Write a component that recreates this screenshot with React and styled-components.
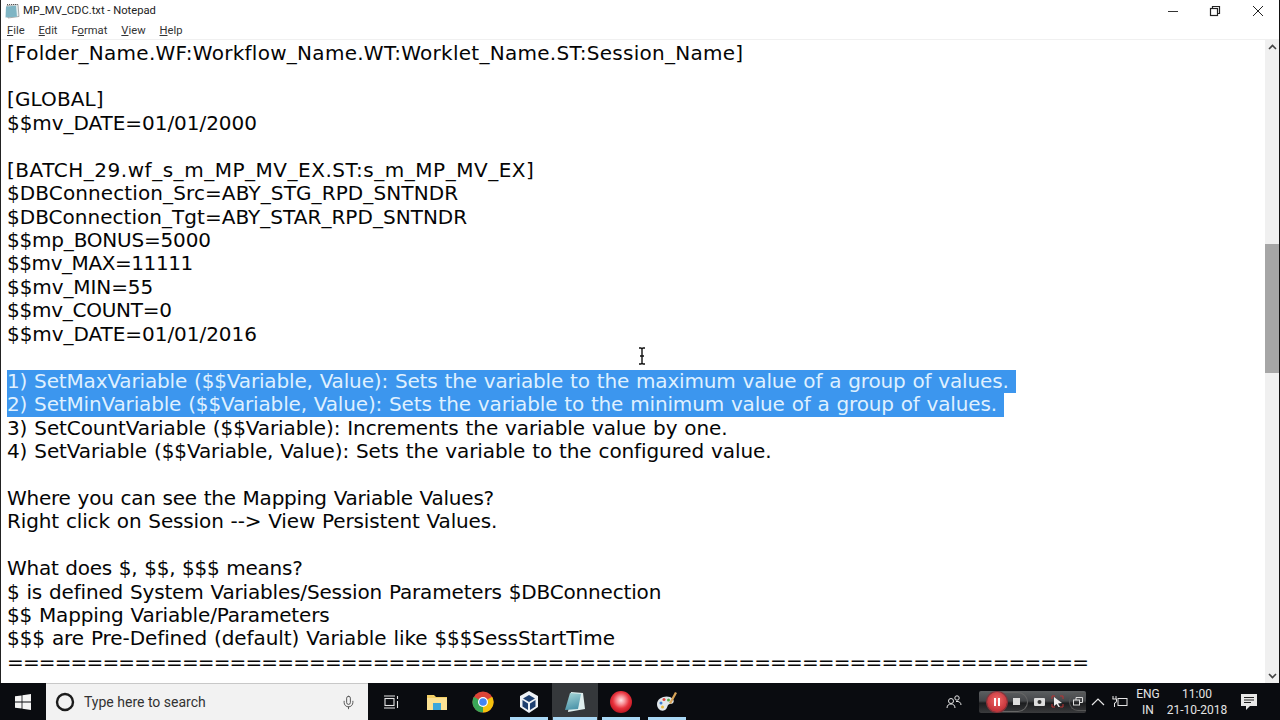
import React from 'react';
import styled, { createGlobalStyle } from 'styled-components';
import { Mic } from 'lucide-react';

const GlobalStyle = createGlobalStyle`
  html, body { margin: 0; padding: 0; background: #fff; }
  #root { width: 1280px; height: 720px; overflow: hidden; }
`;

const Screen = styled.div`
  width: 1280px;
  height: 720px;
  display: flex;
  flex-direction: column;
  overflow: hidden;
  position: relative;
  font-family: Roboto, "Noto Sans", sans-serif;
`;

const Window = styled.div`
  flex: 1;
  min-height: 0;
  display: flex;
  flex-direction: column;
  background: #fff;
  border-left: 1px solid #222;
  border-right: 1px solid #111;
`;

const TitleBar = styled.div`
  height: 20px;
  padding-top: 1px;
  box-sizing: border-box;
  display: flex;
  align-items: center;
  gap: 3px;
  padding-left: 3px;
  font-size: 11.2px;
  color: #222;
`;

const TitleText = styled.span`
  flex: 1;
`;

const WindowControls = styled.div`
  display: flex;
`;

const WindowButton = styled.div`
  width: 42.5px;
  display: flex;
  justify-content: center;
  color: #222;
`;

const MenuBar = styled.div`
  height: 20px;
  display: flex;
  align-items: center;
  gap: 14px;
  padding: 1px 0 0 6px;
  font-size: 11.2px;
  color: #333;
  border-bottom: 1px solid #f0f0f0;
  box-sizing: border-box;
`;

const MenuItem = styled.span`
  & u { text-underline-offset: 1px; }
`;

const Editor = styled.div`
  flex: 1;
  min-height: 0;
  display: flex;
`;

const TextPane = styled.div`
  flex: 1;
  min-width: 0;
  overflow: hidden;
  padding: 1.5px 0 0 6px;
  font-family: "DejaVu Sans", Verdana, sans-serif;
  font-size: 20px;
  word-spacing: 0.7px;
  color: #050505;
`;

const Line = styled.div`
  height: 23.45px;
  line-height: 23.45px;
  white-space: pre;
  letter-spacing: ${(p) => p.$spacing || 0}px;
`;

const Selected = styled.span`
  display: inline-block;
  background: #3c96ee;
  color: #dff0ff;
`;

const Scrollbar = styled.div`
  width: 14px;
  background: #f0f0f0;
  display: flex;
  flex-direction: column;
  align-items: stretch;
`;

const ScrollArrow = styled.div`
  height: 14px;
  display: flex;
  align-items: center;
  justify-content: center;
`;

const ScrollTrack = styled.div`
  flex: 1;
`;

const ScrollThumb = styled.div`
  height: 129px;
  margin-top: 190px;
  background: #a6a6a6;
`;

const IBeam = styled.svg`
  position: absolute;
  left: 637px;
  top: 347px;
`;

const Taskbar = styled.div`
  height: 37px;
  display: flex;
  align-items: stretch;
  background: #0a0c10;
  color: #e8e8e8;
`;

const StartButton = styled.div`
  width: 46px;
  display: flex;
  align-items: center;
  justify-content: center;
`;

const SearchBox = styled.div`
  width: 322px;
  background: #f2f2f2;
  border-top: 1px solid #c8c8c8;
  box-sizing: border-box;
  display: flex;
  align-items: center;
  padding: 0 12px 0 9px;
  gap: 9px;
  font-size: 14px;
  color: #333;
`;

const SearchText = styled.span`
  flex: 1;
`;

const TaskIcons = styled.div`
  display: flex;
  align-items: stretch;
  flex: 1;
`;

const TaskButton = styled.div`
  width: 46px;
  display: flex;
  align-items: center;
  justify-content: center;
  position: relative;
  box-sizing: border-box;
  background: ${(p) => (p.$active ? '#35383b' : 'transparent')};
  &::after {
    content: '';
    display: ${(p) => (p.$running ? 'block' : 'none')};
    position: absolute;
    left: ${(p) => (p.$active ? 1 : 4)}px;
    right: ${(p) => (p.$active ? 1 : 4)}px;
    bottom: 0;
    height: 3px;
    background: #a9d8f5;
  }
`;

const Tray = styled.div`
  display: flex;
  align-items: center;
`;

const RecorderBar = styled.div`
  width: 107px;
  height: 22px;
  margin: 0 5px 0 17px;
  background: linear-gradient(#5c5f61, #45474a 45%, #1c1d1f 55%, #3a3b3d);
  border-radius: 2px;
  display: flex;
  align-items: center;
  padding-left: 8px;
  box-sizing: border-box;
`;

const RecorderPill = styled.div`
  width: 43px;
  height: 20px;
  border: 1px solid #666;
  border-left: none;
  border-radius: 10px;
  box-sizing: border-box;
  display: flex;
  align-items: center;
  margin-right: 6px;
`;

const RecordPause = styled.div`
  width: 20px;
  height: 20px;
  border-radius: 50%;
  background: radial-gradient(circle at 50% 40%, #f26a6a, #b01c24);
  display: flex;
  align-items: center;
  justify-content: center;
  gap: 2px;
  box-shadow: 0 0 0 1px #8a3038;
  & i { display: block; width: 2px; height: 8px; background: #fff; }
`;

const RecorderStop = styled.div`
  width: 7px;
  height: 7px;
  background: #ddd;
  margin-left: 6px;
`;

const RecorderTool = styled.div`
  display: flex;
  margin-right: ${(p) => p.$gap}px;
`;

const WindowPill = styled.div`
  width: 18px;
  height: 18px;
  border: 1px solid #555;
  border-right: none;
  border-radius: 9px 0 0 9px;
  box-sizing: border-box;
  display: flex;
  align-items: center;
  justify-content: center;
`;

const Chevron = styled.svg`
  margin-right: 7px;
`;

const TrayText = styled.div`
  display: flex;
  flex-direction: column;
  align-items: center;
  font-size: 12px;
  line-height: 16px;
  color: #e4e4e4;
  width: ${(p) => p.$width}px;
  margin-left: ${(p) => p.$left || 0}px;
`;

const Notification = styled.div`
  width: 42px;
  margin-right: 10px;
  display: flex;
  justify-content: center;
`;

const lines = [
  { text: '[Folder_Name.WF:Workflow_Name.WT:Worklet_Name.ST:Session_Name]', spacing: 0.274 },
  { text: '' },
  { text: '[GLOBAL]', spacing: 0.12 },
  { text: '$$mv_DATE=01/01/2000', spacing: -0.05 },
  { text: '' },
  { text: '[BATCH_29.wf_s_m_MP_MV_EX.ST:s_m_MP_MV_EX]', spacing: 0.52 },
  { text: '$DBConnection_Src=ABY_STG_RPD_SNTNDR', spacing: 0.11 },
  { text: '$DBConnection_Tgt=ABY_STAR_RPD_SNTNDR', spacing: 0.03 },
  { text: '$$mp_BONUS=5000', spacing: -0.2 },
  { text: '$$mv_MAX=11111', spacing: -0.43 },
  { text: '$$mv_MIN=55', spacing: -0.09 },
  { text: '$$mv_COUNT=0', spacing: -0.25 },
  { text: '$$mv_DATE=01/01/2016', spacing: -0.05 },
  { text: '' },
  { text: '1) SetMaxVariable ($$Variable, Value): Sets the variable to the maximum value of a group of values. ', spacing: -0.155, selected: true },
  { text: '2) SetMinVariable ($$Variable, Value): Sets the variable to the minimum value of a group of values. ', spacing: -0.155, selected: true },
  { text: '3) SetCountVariable ($$Variable): Increments the variable value by one.', spacing: -0.1 },
  { text: '4) SetVariable ($$Variable, Value): Sets the variable to the configured value.', spacing: -0.1 },
  { text: '' },
  { text: 'Where you can see the Mapping Variable Values?', spacing: -0.23 },
  { text: 'Right click on Session --> View Persistent Values.', spacing: -0.14 },
  { text: '' },
  { text: 'What does $, $$, $$$ means?', spacing: -0.25 },
  { text: '$ is defined System Variables/Session Parameters $DBConnection', spacing: -0.166 },
  { text: '$$ Mapping Variable/Parameters', spacing: -0.17 },
  { text: '$$$ are Pre-Defined (default) Variable like $$$SessStartTime', spacing: -0.083 },
  { text: '='.repeat(68), spacing: -0.86 },
];

const TitleIcon = () => (
  <svg width="16" height="16" viewBox="0 0 16 16">
    <path d="M3 2.5 L14 1.5 L15 13.5 L4 15 Z" fill="#e8f0f0" stroke="#777" strokeWidth="0.6" />
    <path d="M2 3.5 L12 2.8 L13 13.8 L1.5 14.5 Z" fill="#7fb5c4" />
    <path d="M3 1.5 H13.5" stroke="#555" strokeWidth="1.2" strokeDasharray="1 1" />
  </svg>
);

const App = () => (
  <Screen>
    <GlobalStyle />
    <Window>
      <TitleBar>
        <TitleIcon />
        <TitleText>MP_MV_CDC.txt - Notepad</TitleText>
        <WindowControls>
          <WindowButton>
            <svg width="12" height="12" viewBox="0 0 12 12"><path d="M1 6.5 H11" stroke="#333" strokeWidth="1" /></svg>
          </WindowButton>
          <WindowButton>
            <svg width="12" height="12" viewBox="0 0 12 12" fill="none" stroke="#222" strokeWidth="1.2">
              <rect x="1.5" y="3.5" width="7" height="7" />
              <path d="M3.5 3.5 V1.5 H10.5 V8.5 H8.5" />
            </svg>
          </WindowButton>
          <WindowButton>
            <svg width="12" height="12" viewBox="0 0 12 12"><path d="M1 1 L11 11 M11 1 L1 11" stroke="#222" strokeWidth="1" /></svg>
          </WindowButton>
        </WindowControls>
      </TitleBar>
      <MenuBar>
        <MenuItem><u>F</u>ile</MenuItem>
        <MenuItem><u>E</u>dit</MenuItem>
        <MenuItem>F<u>o</u>rmat</MenuItem>
        <MenuItem><u>V</u>iew</MenuItem>
        <MenuItem><u>H</u>elp</MenuItem>
      </MenuBar>
      <Editor>
        <TextPane>
          {lines.map((line, i) => (
            <Line key={i} $spacing={line.spacing}>
              {line.selected ? <Selected>{line.text}</Selected> : line.text}
            </Line>
          ))}
        </TextPane>
        <Scrollbar>
          <ScrollArrow>
            <svg width="9" height="6" viewBox="0 0 9 6"><path d="M1 5 L4.5 1.5 L8 5" fill="none" stroke="#444" strokeWidth="1.6" /></svg>
          </ScrollArrow>
          <ScrollTrack><ScrollThumb /></ScrollTrack>
          <ScrollArrow>
            <svg width="9" height="6" viewBox="0 0 9 6"><path d="M1 1 L4.5 4.5 L8 1" fill="none" stroke="#444" strokeWidth="1.6" /></svg>
          </ScrollArrow>
        </Scrollbar>
      </Editor>
    </Window>
    <Taskbar>
      <StartButton>
        <svg width="16" height="16" viewBox="0 0 16 16" fill="#f4f4f4">
          <path d="M0 2.3 L6.6 1.4 V7.5 H0 Z M7.4 1.3 L16 0 V7.5 H7.4 Z M0 8.4 H6.6 V14.6 L0 13.7 Z M7.4 8.4 H16 V16 L7.4 14.8 Z" />
        </svg>
      </StartButton>
      <SearchBox>
        <svg width="20" height="20" viewBox="0 0 20 20"><circle cx="10" cy="10" r="8" fill="none" stroke="#1c1c1c" strokeWidth="2.4" /></svg>
        <SearchText>Type here to search</SearchText>
        <Mic size={15} color="#444" strokeWidth={1.4} />
      </SearchBox>
      <TaskIcons>
        <TaskButton>
          <svg width="16" height="14" viewBox="0 0 16 14" fill="none" stroke="#e6e6e6" strokeWidth="1.1">
            <rect x="2" y="3.5" width="9" height="7" />
            <path d="M1 1 H12 M1 13 H12 M14.5 1 V4 M14.5 6 V13" />
          </svg>
        </TaskButton>
        <TaskButton>
          <svg width="22" height="20" viewBox="0 0 22 20">
            <path d="M1 3 H8 L10 5 H21 V18 H1 Z" fill="#f3cf64" />
            <rect x="1" y="6" width="20" height="12" fill="#fbe193" />
            <rect x="7" y="11" width="8" height="7" fill="#3aa6dc" />
          </svg>
        </TaskButton>
        <TaskButton>
          <svg width="22" height="22" viewBox="0 0 22 22">
            <circle cx="11" cy="11" r="10.5" fill="#db4437" />
            <path d="M11 11 L20.1 5.7 A10.5 10.5 0 0 1 11 21.5 Z" fill="#f4c20d" />
            <path d="M11 11 L11 21.5 A10.5 10.5 0 0 1 1.9 5.7 Z" fill="#3aa757" />
            <circle cx="11" cy="11" r="5" fill="#fff" />
            <circle cx="11" cy="11" r="3.8" fill="#4285f4" />
          </svg>
        </TaskButton>
        <TaskButton $running>
          <svg width="22" height="24" viewBox="0 0 22 24">
            <path d="M11 1 L20 6 V17 L11 23 L2 17 V6 Z" fill="#eef2f6" />
            <path d="M11 5 L17 8.5 L11 12 L5 8.5 Z" fill="#1d3f70" />
            <path d="M4.5 10 L10 13.5 V20 L4.5 16.5 Z M17.5 10 L12 13.5 V20 L17.5 16.5 Z" fill="#1d3f70" />
          </svg>
        </TaskButton>
        <TaskButton $running $active>
          <svg width="24" height="24" viewBox="0 0 24 24">
            <defs>
              <linearGradient id="padFace" x1="0" y1="0" x2="0.3" y2="1">
                <stop offset="0" stopColor="#a9d8d8" />
                <stop offset="1" stopColor="#4f97ac" />
              </linearGradient>
            </defs>
            <path d="M8 2 L20 3 L22 19 L5 22 Z" fill="#dfeeee" />
            <path d="M7 3 L18 4 L15 19 L2 20 Z" fill="url(#padFace)" />
          </svg>
        </TaskButton>
        <TaskButton $running>
          <svg width="24" height="24" viewBox="0 0 24 24">
            <defs>
              <radialGradient id="recGlow" cx="0.5" cy="0.42" r="0.6">
                <stop offset="0" stopColor="#ffe4e6" />
                <stop offset="0.3" stopColor="#f8959b" />
                <stop offset="0.62" stopColor="#e8323d" />
                <stop offset="1" stopColor="#b5121c" />
              </radialGradient>
            </defs>
            <circle cx="12" cy="12" r="11" fill="url(#recGlow)" />
          </svg>
        </TaskButton>
        <TaskButton $running>
          <svg width="24" height="24" viewBox="0 0 24 24">
            <path d="M2 14 C2 8 10 5 15 7 C20 9 20 14 15 14 C12 14 13 18 10 20 C6 22 2 19 2 14 Z" fill="#dfe6ea" />
            <circle cx="6" cy="13" r="1.5" fill="#3f7fd0" />
            <circle cx="9" cy="9.5" r="1.5" fill="#e0483e" />
            <circle cx="13.5" cy="10" r="1.5" fill="#57a84a" />
            <circle cx="7.5" cy="17" r="1.5" fill="#e8b93c" />
            <path d="M14 13 L20 2 L22 3 L16 14 Z" fill="#d8a458" />
          </svg>
        </TaskButton>
      </TaskIcons>
      <Tray>
        <svg width="16" height="16" viewBox="0 0 16 16" fill="none" stroke="#e6e6e6" strokeWidth="1">
          <circle cx="5" cy="7" r="2.5" />
          <path d="M1 14 C1 11 3 10 5 10 C7 10 9 11 9 14" />
          <circle cx="11" cy="4" r="2.2" />
          <path d="M10 7.5 C13 7 15 8.5 15 11" />
        </svg>
        <RecorderBar>
          <RecorderPill>
            <RecordPause><i /><i /></RecordPause>
            <RecorderStop />
          </RecorderPill>
          <RecorderTool $gap={6}>
            <svg width="11" height="9" viewBox="0 0 11 9"><rect y="1" width="11" height="8" rx="1" fill="#ddd" /><circle cx="5.5" cy="5" r="2" fill="#333" /></svg>
          </RecorderTool>
          <RecorderTool $gap={5}>
            <svg width="13" height="13" viewBox="0 0 13 13">
              <path d="M1 4 V1 H4 M9 1 H12 V4 M12 9 V12 H9 M4 12 H1 V9" fill="none" stroke="#b33" strokeWidth="1" />
              <path d="M3 2 L11 8 L7 8.5 L9 12 L7.5 12 L5.5 9 L3 11 Z" fill="#eee" />
            </svg>
          </RecorderTool>
          <WindowPill>
            <svg width="10" height="9" viewBox="0 0 10 9" fill="none" stroke="#ddd" strokeWidth="1"><rect x="0.5" y="3" width="6" height="5" /><path d="M3 3 V0.5 H9.5 V5.5 H6.5" /></svg>
          </WindowPill>
        </RecorderBar>
        <Chevron width="14" height="8" viewBox="0 0 14 8"><path d="M1 7 L7 1 L13 7" fill="none" stroke="#e6e6e6" strokeWidth="1.2" /></Chevron>
        <svg width="16" height="14" viewBox="0 0 16 14" fill="none" stroke="#e6e6e6" strokeWidth="1">
          <rect x="6" y="3.5" width="9" height="7" />
          <path d="M1 1 V4 M4 1 V4 M0.5 4 H4.5 V6 Q4.5 8 2.5 8 V12" />
        </svg>
        <TrayText $width={30} $left={5}><span>ENG</span><span>IN</span></TrayText>
        <TrayText $width={62} $left={3}><span>11:00</span><span>21-10-2018</span></TrayText>
        <Notification>
          <svg width="18" height="18" viewBox="0 0 18 18">
            <path d="M1 1 H17 V13 H10 L6 17 V13 H1 Z" fill="#e8e8e8" />
            <path d="M4 4.5 H14 M4 7 H14 M4 9.5 H11" stroke="#222" strokeWidth="1" />
          </svg>
        </Notification>
      </Tray>
    </Taskbar>
    <IBeam width="10" height="18" viewBox="0 0 10 18">
      <path d="M2 1 H4 L5 2 L6 1 H8 M5 2 V16 M2 17 H4 L5 16 L6 17 H8 M3 9 H7" fill="none" stroke="#111" strokeWidth="1.4" />
    </IBeam>
  </Screen>
);

export default App;
